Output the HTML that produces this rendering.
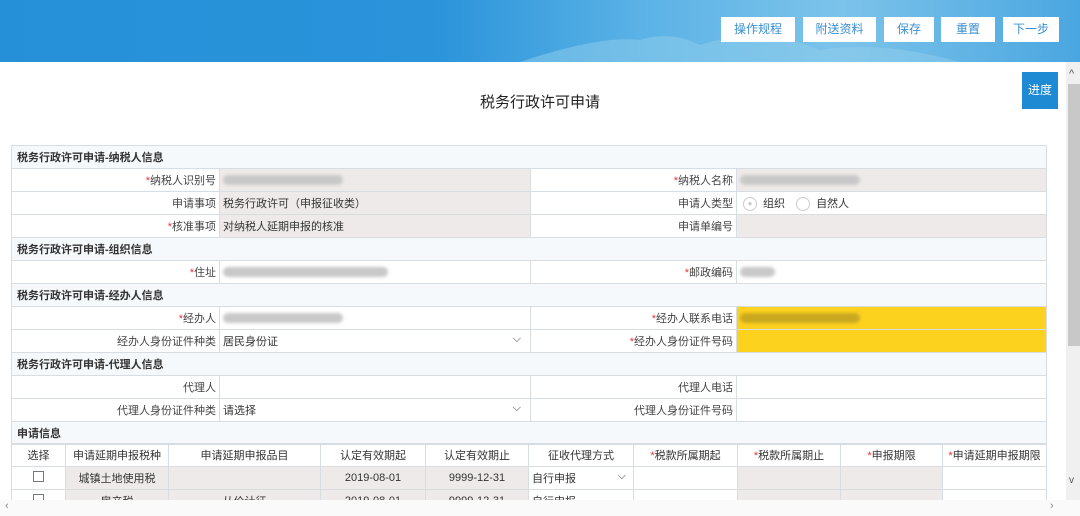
<!DOCTYPE html>
<html><head><meta charset="utf-8"><style>
*{box-sizing:border-box;margin:0;padding:0}
body{width:1080px;height:516px;overflow:hidden;background:#fff;font-family:"Liberation Sans","Noto Sans CJK SC",sans-serif;font-size:11px;color:#333;position:relative}
.banner{position:absolute;left:0;top:0;width:1080px;height:62px;background:linear-gradient(90deg,#2590d8 0%,#2a93da 40%,#5cb3e6 60%,#7cc3ea 78%,#4aa6e0 100%);overflow:hidden}
.btn{position:absolute;top:17px;height:25px;background:#fff;color:#3a8fd0;font-size:12px;text-align:center;line-height:25px}
.title{position:absolute;top:91px;left:0;width:1080px;text-align:center;font-size:15px;color:#222}
.prog{position:absolute;left:1022px;top:72px;width:36px;height:37px;background:#1e8ad4;color:#fff;font-size:12px;line-height:37px;text-align:center}
.vs{position:absolute;left:1066px;top:62px;width:14px;height:438px;background:#f0f0f0}
.thumb{position:absolute;left:1068px;top:84px;width:12px;height:262px;background:#c8c8c8}
.hs{position:absolute;left:0;top:500px;width:1080px;height:16px;background:#fafafa}
table{position:absolute;left:11px;border-collapse:collapse;table-layout:fixed;width:1035px}
td{border:1px solid #d8dde2;height:23px;padding:0 3px;white-space:nowrap;overflow:hidden}
.sec td{background:#f5f9fc;font-weight:bold;color:#333;font-size:11px;padding-left:5px}
.l{text-align:right;color:#444}
.g{background:#efeaea}
.r{color:#e33}
.y{background:#fdd21f}
.blur{display:inline-block;height:10px;background:#c8c8c8;border-radius:5px;vertical-align:middle;filter:blur(1.5px)}
.c td{text-align:center}
</style></head><body>
<div class="banner">
<svg width="1080" height="62" style="position:absolute;left:0;top:0"><path d="M520 62 Q600 35 640 40 Q670 30 700 45 Q760 25 820 50 Q880 40 960 62Z" fill="#8fcdec" opacity=".5"/></svg>
</div>
<div class="btn" style="left:721px;width:74px">操作规程</div>
<div class="btn" style="left:803px;width:73px">附送资料</div>
<div class="btn" style="left:884px;width:50px">保存</div>
<div class="btn" style="left:941px;width:54px">重置</div>
<div class="btn" style="left:1003px;width:56px">下一步</div>
<div class="title">税务行政许可申请</div>
<div class="prog">进度</div>
<div class="vs"></div><div class="thumb"></div>
<div style="position:absolute;left:1069px;top:68px;font-size:11px;color:#555">^</div>
<div style="position:absolute;left:1069px;top:475px;font-size:10px;color:#555">v</div>
<table style="top:145px">
<colgroup><col style="width:208px"><col style="width:311px"><col style="width:206px"><col style="width:310px"></colgroup>
<tr class="sec"><td colspan="4">税务行政许可申请-纳税人信息</td></tr>
<tr><td class="l"><span class="r">*</span>纳税人识别号</td><td class="g"><span class="blur" style="width:120px"></span></td><td class="l"><span class="r">*</span>纳税人名称</td><td class="g"><span class="blur" style="width:120px"></span></td></tr>
<tr><td class="l">申请事项</td><td class="g">税务行政许可（申报征收类）</td><td class="l">申请人类型</td><td><span style="display:inline-block;width:14px;height:14px;border:1px solid #ccc;border-radius:50%;vertical-align:middle;margin:0 6px 0 3px;text-align:center;line-height:11px;color:#ccc;font-size:8px">●</span>组织 <span style="display:inline-block;width:14px;height:14px;border:1px solid #ccc;border-radius:50%;vertical-align:middle;margin:0 6px 0 8px"></span>自然人</td></tr>
<tr><td class="l"><span class="r">*</span>核准事项</td><td class="g">对纳税人延期申报的核准</td><td class="l">申请单编号</td><td class="g"></td></tr>
<tr class="sec"><td colspan="4">税务行政许可申请-组织信息</td></tr>
<tr><td class="l"><span class="r">*</span>住址</td><td><span class="blur" style="width:165px"></span></td><td class="l"><span class="r">*</span>邮政编码</td><td><span class="blur" style="width:35px"></span></td></tr>
<tr class="sec"><td colspan="4">税务行政许可申请-经办人信息</td></tr>
<tr><td class="l"><span class="r">*</span>经办人</td><td><span class="blur" style="width:120px"></span></td><td class="l"><span class="r">*</span>经办人联系电话</td><td class="y"><span class="blur" style="width:120px;background:#c9a820"></span></td></tr>
<tr><td class="l">经办人身份证件种类</td><td>居民身份证<span style="float:right;margin-right:6px">⌵</span></td><td class="l"><span class="r">*</span>经办人身份证件号码</td><td class="y"></td></tr>
<tr class="sec"><td colspan="4">税务行政许可申请-代理人信息</td></tr>
<tr><td class="l">代理人</td><td></td><td class="l">代理人电话</td><td></td></tr>
<tr><td class="l">代理人身份证件种类</td><td>请选择<span style="float:right;margin-right:6px">⌵</span></td><td class="l">代理人身份证件号码</td><td></td></tr>
<tr class="sec"><td colspan="4">申请信息</td></tr>
</table>
<table style="top:443px" class="c">
<colgroup><col style="width:54px"><col style="width:103px"><col style="width:152px"><col style="width:105px"><col style="width:103px"><col style="width:105px"><col style="width:104px"><col style="width:103px"><col style="width:102px"><col style="width:104px"></colgroup>
<tr><td>选择</td><td>申请延期申报税种</td><td>申请延期申报品目</td><td>认定有效期起</td><td>认定有效期止</td><td>征收代理方式</td><td><span class="r">*</span>税款所属期起</td><td><span class="r">*</span>税款所属期止</td><td><span class="r">*</span>申报期限</td><td><span class="r">*</span>申请延期申报期限</td></tr>
<tr><td><span style="display:inline-block;width:11px;height:11px;border:1px solid #777"></span></td><td class="g">城镇土地使用税</td><td class="g"></td><td class="g">2019-08-01</td><td class="g">9999-12-31</td><td style="text-align:left">自行申报<span style="float:right;margin-right:4px">⌵</span></td><td></td><td class="g"></td><td class="g"></td><td></td></tr>
<tr><td><span style="display:inline-block;width:11px;height:11px;border:1px solid #777"></span></td><td class="g">房产税</td><td class="g">从价计征</td><td class="g">2019-08-01</td><td class="g">9999-12-31</td><td style="text-align:left">自行申报</td><td></td><td class="g"></td><td class="g"></td><td></td></tr>
</table>
<div class="hs"></div>
<div style="position:absolute;left:5px;top:500px;font-size:11px;color:#888">‹</div>
<div style="position:absolute;left:1050px;top:500px;font-size:11px;color:#888">›</div>
</body></html>
